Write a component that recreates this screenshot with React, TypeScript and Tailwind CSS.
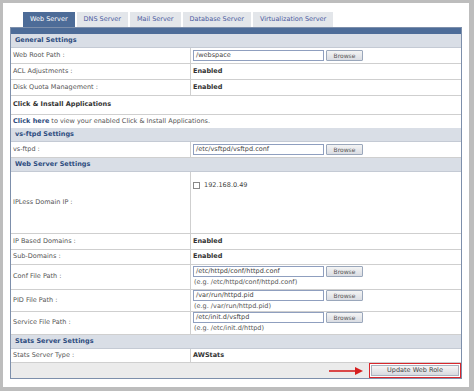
import React from "react";

const font = { fontFamily: '"DejaVu Sans", Verdana, sans-serif' };

function SectionHeader({ title }: { title: string }) {
  return (
    <div className="h-[14px] bg-[#d9dee6] border-b border-[#c4cad4] flex items-center pl-[4px] text-[6.5px] font-bold text-[#2d4c7e]">
      {title}
    </div>
  );
}

function Row({
  label,
  h,
  children,
  labelAlign = "center",
}: {
  label: string;
  h: string;
  children?: React.ReactNode;
  labelAlign?: string;
}) {
  return (
    <div className={`grid grid-cols-[180px_1fr] border-b border-[#cfcfcf] ${h}`}>
      <div className="border-r border-[#cfcfcf] flex items-center pl-[2px] text-[6.5px] text-[#555]">
        {label}
      </div>
      <div className="flex flex-col justify-center pl-[2px]">{children}</div>
    </div>
  );
}

function Input({ value }: { value: string }) {
  return (
    <div className="flex items-center gap-[2px]">
      <div className="w-[131px] h-[11px] border border-[#8f9fbf] bg-white flex items-center pl-[2px] text-[6.5px] text-[#444]">
        {value}
      </div>
      <div className="w-[37px] h-[11px] border border-[#9aa7bb] rounded-[1px] bg-gradient-to-b from-[#f4f4f4] to-[#dadde3] flex items-center justify-center text-[6px] text-[#555]">
        Browse
      </div>
    </div>
  );
}

function Enabled({ text = "Enabled" }: { text?: string }) {
  return <div className="text-[6.5px] font-bold text-[#333]">{text}</div>;
}

function Hint({ text }: { text: string }) {
  return <div className="text-[6.5px] text-[#555] pl-[1px] mt-[1px]">{text}</div>;
}

export default function App() {
  const tabs = ["Web Server", "DNS Server", "Mail Server", "Database Server", "Virtualization Server"];
  return (
    <div className="w-[474px] h-[391px] bg-[#bdbdbd] pt-[3px] pl-[3px] pr-[5px] pb-[4px]" style={font}>
      <div className="w-full h-full bg-white pt-[9px] pl-[7px] pr-[7px]">
        <div className="flex pl-[13px] gap-[2px] h-[15px]">
          {tabs.map((t, i) => (
            <div
              key={t}
              className={
                i === 0
                  ? "h-full px-[7px] flex items-center bg-[#4d6c98] text-white text-[6.5px]"
                  : "h-full px-[7px] flex items-center bg-[#e3e6ea] text-[#4a5aa0] text-[6.5px]"
              }
            >
              {t}
            </div>
          ))}
        </div>
        <div className="w-[452px] border border-[#7d8fab]">
          <div className="h-[6px] bg-[#4d6c98]" />
          <SectionHeader title="General Settings" />
          <Row label="Web Root Path :" h="h-[16px]">
            <Input value="/webspace" />
          </Row>
          <Row label="ACL Adjustments :" h="h-[16px]">
            <Enabled />
          </Row>
          <Row label="Disk Quota Management :" h="h-[16px]">
            <Enabled />
          </Row>
          <div className="h-[19px] border-b border-[#cfcfcf] flex items-center pl-[2px] text-[6.5px] font-bold text-[#333]">
            Click &amp; Install Applications
          </div>
          <div className="h-[13px] flex items-center pl-[2px] text-[6.5px] text-[#555]">
            <span className="font-bold text-[#2d4c7e] mr-[2px]">Click here</span> to view your enabled Click &amp; Install Applications.
          </div>
          <SectionHeader title="vs-ftpd Settings" />
          <Row label="vs-ftpd :" h="h-[16px]">
            <Input value="/etc/vsftpd/vsftpd.conf" />
          </Row>
          <SectionHeader title="Web Server Settings" />
          <div className="grid grid-cols-[180px_1fr] border-b border-[#cfcfcf] h-[62px]">
            <div className="border-r border-[#cfcfcf] flex items-center pl-[2px] text-[6.5px] text-[#555]">
              IPLess Domain IP :
            </div>
            <div className="pl-[2px] pt-[9px] flex items-start gap-[4px]">
              <div className="w-[7px] h-[7px] border border-[#888] bg-white mt-[1px]" />
              <span className="text-[6.5px] text-[#444]">192.168.0.49</span>
            </div>
          </div>
          <Row label="IP Based Domains :" h="h-[16px]">
            <Enabled />
          </Row>
          <Row label="Sub-Domains :" h="h-[15px]">
            <Enabled />
          </Row>
          <Row label="Conf File Path :" h="h-[25px]">
            <Input value="/etc/httpd/conf/httpd.conf" />
            <Hint text="(e.g. /etc/httpd/conf/httpd.conf)" />
          </Row>
          <Row label="PID File Path :" h="h-[22px]">
            <Input value="/var/run/httpd.pid" />
            <Hint text="(e.g. /var/run/httpd.pid)" />
          </Row>
          <Row label="Service File Path :" h="h-[23px]">
            <Input value="/etc/init.d/vsftpd" />
            <Hint text="(e.g. /etc/init.d/httpd)" />
          </Row>
          <SectionHeader title="Stats Server Settings" />
          <Row label="Stats Server Type :" h="h-[14px]">
            <Enabled text="AWStats" />
          </Row>
          <div className="h-[15px] bg-[#ebebeb] flex items-center justify-end relative">
            <svg className="absolute left-[318px] top-[4px]" width="34" height="8" viewBox="0 0 34 8">
              <line x1="0" y1="4" x2="27" y2="4" stroke="#d61f1f" strokeWidth="1.6" />
              <polygon points="26,0 34,4 26,8" fill="#d61f1f" />
            </svg>
            <div className="w-[92px] h-[15px] border border-[#d9262c] bg-white p-[1px]">
              <div className="w-full h-full bg-gradient-to-b from-[#f6f6f6] to-[#d8dadf] border border-[#a9b1bd] flex items-center justify-center text-[6.5px] text-[#444]">
                Update Web Role
              </div>
            </div>
          </div>
        </div>
      </div>
    </div>
  );
}
